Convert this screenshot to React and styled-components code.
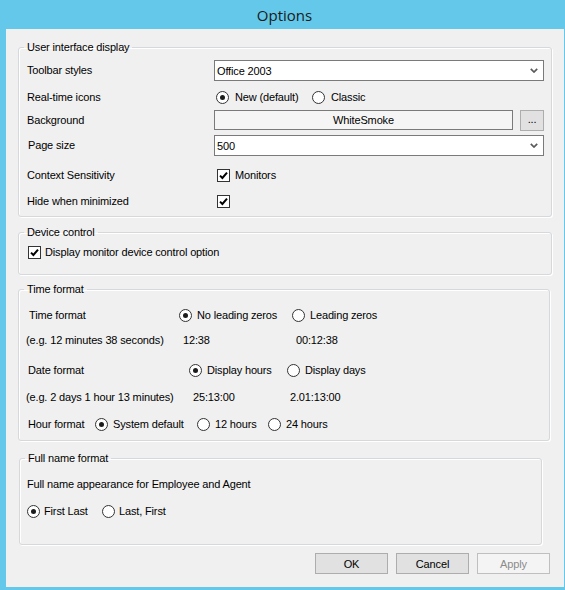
import React from "react";
import styled, { createGlobalStyle } from "styled-components";

const GlobalStyle = createGlobalStyle`
  html, body {
    background-color: #63c8e9;
    margin: 0;
    padding: 0;
  }

  body {
    color: #000;
    font-family: "Liberation Sans", Arial, sans-serif;
    font-size: 11px;
    letter-spacing: -0.15px;
  }
`;

const Window = styled.div`
  background-color: #63c8e9;
  display: flex;
  flex-direction: column;
  height: 590px;
  width: 565px;
`;

const TitleBar = styled.div`
  align-items: center;
  color: #1a1a1a;
  display: flex;
  font-family: "Open Sans", "Noto Sans", sans-serif;
  font-size: 15px;
  height: 29px;
  justify-content: center;
  letter-spacing: 0;
  padding-left: 4px;
`;

const Client = styled.div`
  background-color: #f0f0f0;
  display: flex;
  flex: 1;
  flex-direction: column;
  margin: 0 1px 3px 6px;
  padding-top: 12px;
`;

const Group = styled.fieldset`
  border: 1px solid #d5d9dc;
  border-radius: 3px;
  box-shadow: inset 1px 1px 0 #fff, 1px 1px 0 #fff;
  box-sizing: border-box;
  margin: ${p => p.$mt || 0}px 0 0 ${p => p.$ml || 12}px;
  min-width: 0;
  padding: ${p => p.$pt}px 0 ${p => p.$pb}px 0;
  width: ${p => p.$w}px;
`;

const Legend = styled.legend`
  line-height: 13px;
  margin-left: 5px;
  padding: 0 3px;
`;

const Row = styled.div`
  align-items: center;
  display: flex;
  height: ${p => p.$h || 20}px;
  margin-top: ${p => p.$mt || 0}px;
  padding-left: ${p => p.$pl || 0}px;
`;

const Cell = styled.span`
  flex: none;
  line-height: 13px;
  white-space: nowrap;
  width: ${p => (p.$w ? `${p.$w}px` : "auto")};
`;

const Combo = styled.div`
  align-items: center;
  background-color: #fff;
  border: 1px solid #7a7a7a;
  box-sizing: border-box;
  display: flex;
  height: 21px;
  justify-content: space-between;
  padding: 0 5px 0 2px;
  width: 330px;
`;

const ColorBox = styled.div`
  align-items: center;
  background-color: #f5f5f5;
  border: 1px solid #7a7a7a;
  box-sizing: border-box;
  display: flex;
  height: 20px;
  justify-content: center;
  width: 299px;
`;

const BrowseButton = styled.div`
  align-items: center;
  background-color: #e1e1e1;
  border: 1px solid #adadad;
  box-sizing: border-box;
  display: flex;
  height: 21px;
  justify-content: center;
  margin-left: 7px;
  padding-bottom: 3px;
  width: 24px;
`;

const Option = styled.label`
  align-items: center;
  display: flex;
  flex: none;
  gap: ${p => p.$gap ?? 5}px;
  line-height: 13px;
  white-space: nowrap;
  width: ${p => (p.$w ? `${p.$w}px` : "auto")};
`;

const RadioCircle = styled.span`
  align-items: center;
  background-color: #fff;
  border: 1px solid #333;
  border-radius: 50%;
  box-sizing: border-box;
  display: flex;
  flex: none;
  height: 13px;
  justify-content: center;
  width: 13px;

  &::after {
    background-color: ${p => (p.$checked ? "#1c1c1c" : "transparent")};
    border-radius: 50%;
    content: "";
    height: 5px;
    width: 5px;
  }
`;

const CheckSquare = styled.span`
  align-items: center;
  background-color: #fff;
  border: 1px solid #333;
  box-sizing: border-box;
  display: flex;
  flex: none;
  height: 13px;
  justify-content: center;
  width: 13px;
`;

const ButtonBar = styled.div`
  display: flex;
  gap: 8px;
  justify-content: flex-end;
  margin-top: 8px;
  padding-right: 14px;
`;

const Button = styled.div`
  align-items: center;
  background-color: ${p => (p.$disabled ? "#f4f4f4" : "#e1e1e1")};
  border: 1px solid ${p => (p.$disabled ? "#bfbfbf" : "#adadad")};
  box-sizing: border-box;
  color: ${p => (p.$disabled ? "#8b8b8b" : "#000")};
  display: flex;
  height: 21px;
  justify-content: center;
  width: 73px;
`;

const Chevron = () => (
  <svg width="8" height="5" viewBox="0 0 8 5">
    <polyline points="0.8,0.8 4,4 7.2,0.8" fill="none" stroke="#5a5a5a" strokeWidth="1.7" />
  </svg>
);

const Radio = ({ checked, children, gap, width }) => (
  <Option $gap={gap} $w={width}>
    <RadioCircle $checked={checked} />
    {children}
  </Option>
);

const Checkbox = ({ children, gap, width }) => (
  <Option $gap={gap} $w={width}>
    <CheckSquare>
      <svg width="9" height="9" viewBox="0 0 9 9">
        <polyline points="1,4.6 3.4,7 8,1.6" fill="none" stroke="#000" strokeWidth="2" />
      </svg>
    </CheckSquare>
    {children}
  </Option>
);

export default function App() {
  return (
    <Window>
      <GlobalStyle />
      <TitleBar>Options</TitleBar>
      <Client>
        <Group $w={534} $pt={6} $pb={5}>
          <Legend>User interface display</Legend>
          <Row $h={21} $pl={8}>
            <Cell $w={187}>Toolbar styles</Cell>
            <Combo>
              <span>Office 2003</span>
              <Chevron />
            </Combo>
          </Row>
          <Row $mt={6} $pl={8}>
            <Cell $w={189}>Real-time icons</Cell>
            <Radio checked gap={6} width={96}>New (default)</Radio>
            <Radio gap={6}>Classic</Radio>
          </Row>
          <Row $mt={3} $pl={8}>
            <Cell $w={187}>Background</Cell>
            <ColorBox>WhiteSmoke</ColorBox>
            <BrowseButton>...</BrowseButton>
          </Row>
          <Row $h={21} $mt={5} $pl={9}>
            <Cell $w={186}>Page size</Cell>
            <Combo>
              <span>500</span>
              <Chevron />
            </Combo>
          </Row>
          <Row $mt={9} $pl={8}>
            <Cell $w={190}>Context Sensitivity</Cell>
            <Checkbox>Monitors</Checkbox>
          </Row>
          <Row $mt={6} $pl={8}>
            <Cell $w={190}>Hide when minimized</Cell>
            <Checkbox />
          </Row>
        </Group>

        <Group $w={534} $mt={9} $pt={3} $pb={12}>
          <Legend>Device control</Legend>
          <Row $pl={9}>
            <Checkbox gap={4}>Display monitor device control option</Checkbox>
          </Row>
        </Group>

        <Group $w={532} $mt={8} $pt={9} $pb={6}>
          <Legend>Time format</Legend>
          <Row $pl={10}>
            <Cell $w={150}>Time format</Cell>
            <Radio checked width={113}>No leading zeros</Radio>
            <Radio>Leading zeros</Radio>
          </Row>
          <Row $mt={5} $pl={7}>
            <Cell $w={157}>(e.g. 12 minutes 38 seconds)</Cell>
            <Cell $w={113}>12:38</Cell>
            <Cell>00:12:38</Cell>
          </Row>
          <Row $mt={10} $pl={9}>
            <Cell $w={161}>Date format</Cell>
            <Radio checked width={98}>Display hours</Radio>
            <Radio>Display days</Radio>
          </Row>
          <Row $mt={7} $pl={7}>
            <Cell $w={167}>(e.g. 2 days 1 hour 13 minutes)</Cell>
            <Cell $w={97}>25:13:00</Cell>
            <Cell>2.01:13:00</Cell>
          </Row>
          <Row $mt={7} $pl={9}>
            <Cell $w={67}>Hour format</Cell>
            <Radio checked width={102}>System default</Radio>
            <Radio width={71}>12 hours</Radio>
            <Radio>24 hours</Radio>
          </Row>
        </Group>

        <Group $w={523} $ml={13} $mt={11} $pt={9} $pb={23}>
          <Legend>Full name format</Legend>
          <Row $pl={7}>
            <Cell>Full name appearance for Employee and Agent</Cell>
          </Row>
          <Row $mt={7} $pl={7}>
            <Radio checked gap={4} width={75}>First Last</Radio>
            <Radio gap={4}>Last, First</Radio>
          </Row>
        </Group>

        <ButtonBar>
          <Button>OK</Button>
          <Button>Cancel</Button>
          <Button $disabled>Apply</Button>
        </ButtonBar>
      </Client>
    </Window>
  );
}
